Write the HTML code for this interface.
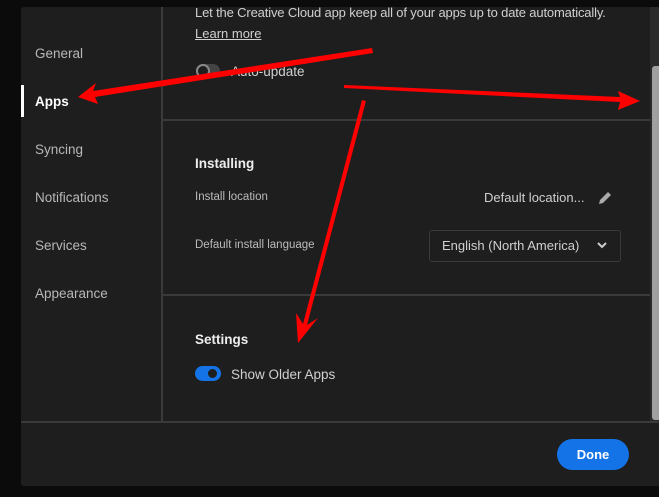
<!DOCTYPE html>
<html><head><style>
body{margin:0;width:659px;height:497px;background:#0b0b0b;position:relative;overflow:hidden;font-family:"Liberation Sans",sans-serif;}
.dlg{position:absolute;left:21px;top:7px;width:640px;height:479px;background:#1e1e1e;border-radius:3px;}
.abs{position:absolute;}
.nav{position:absolute;left:35px;font-size:13.5px;color:#b8b8b8;}
.t{position:absolute;color:#d0d0d0;font-size:12px;}
</style></head><body>
<div class="dlg"></div>
<div class="abs" style="left:161px;top:7px;width:2px;height:414px;background:#3a3a3a"></div>
<div class="abs" style="left:162px;top:119px;width:488px;height:2px;background:#3a3a3a"></div>
<div class="abs" style="left:162px;top:294px;width:488px;height:2px;background:#3a3a3a"></div>
<div class="abs" style="left:21px;top:421px;width:638px;height:2px;background:#3a3a3a"></div>
<div class="abs" style="left:650px;top:7px;width:9px;height:414px;background:#2a2a2a"></div>
<div class="abs" style="left:652px;top:66px;width:7px;height:354px;background:#a0a0a0;border-radius:3px 0 0 3px"></div>
<div class="abs" style="left:21px;top:85px;width:3px;height:32px;background:#fff"></div>
<div class="nav" style="top:46px">General</div>
<div class="nav" style="top:94px;color:#fff;font-weight:bold">Apps</div>
<div class="nav" style="top:142px">Syncing</div>
<div class="nav" style="top:190px">Notifications</div>
<div class="nav" style="top:238px">Services</div>
<div class="nav" style="top:286px">Appearance</div>
<div class="t" style="left:195px;top:5px;font-size:13px;letter-spacing:-0.15px">Let the Creative Cloud app keep all of your apps up to date automatically.</div>
<div class="t" style="left:195px;top:26px;font-size:13px;text-decoration:underline">Learn more</div>
<div class="abs" style="left:196px;top:64px;width:24px;height:14px;border-radius:7px;background:#444"></div>
<div class="abs" style="left:196px;top:64px;width:10px;height:10px;border:2px solid #888;border-radius:7px;background:#1e1e1e"></div>
<div class="t" style="left:231px;top:64px;font-size:13.5px">Auto-update</div>
<div class="t" style="left:195px;top:156px;font-size:13.5px;font-weight:bold;color:#eee">Installing</div>
<div class="t" style="left:195px;top:191px;font-size:11.5px;color:#bbb">Install location</div>
<div class="t" style="left:484px;top:190px;font-size:13px">Default location...</div>
<svg class="abs" style="left:596px;top:189px" width="18" height="18" viewBox="0 0 18 18"><path d="M3 15 L4 11 L12 3 L15 6 L7 14 Z" fill="#aaa"/></svg>
<div class="t" style="left:195px;top:239px;font-size:11.5px;color:#bbb">Default install language</div>
<div class="abs" style="left:429px;top:230px;width:190px;height:30px;border:1px solid #3a3a3a;border-radius:3px"></div>
<div class="t" style="left:442px;top:238px;font-size:13px">English (North America)</div>
<svg class="abs" style="left:596px;top:240px" width="12" height="10"><path d="M2 3 L6 7 L10 3" stroke="#ccc" stroke-width="2" fill="none"/></svg>
<div class="t" style="left:195px;top:332px;font-size:13.5px;font-weight:bold;color:#eee">Settings</div>
<div class="abs" style="left:195px;top:366px;width:26px;height:15px;border-radius:8px;background:#1473e6"></div>
<div class="abs" style="left:208px;top:369px;width:9px;height:9px;border-radius:6px;background:#1e1e1e"></div>
<div class="t" style="left:231px;top:367px;font-size:13.5px">Show Older Apps</div>
<div class="abs" style="left:557px;top:439px;width:72px;height:31px;border-radius:16px;background:#1473e6;color:#fff;font-weight:bold;font-size:13px;text-align:center;line-height:31px">Done</div>
<svg class="abs" style="left:0;top:0" width="659" height="497">
<g fill="#ff0000">
<polygon points="372,48 373,53 95,97 98,104 78,97 96,83 93,91"/>
<polygon points="344,85 344,88 620,102 618,110 640,101 618,91 620,97"/>
<polygon points="362,100 366,101 307,325 318,318 298,343 296,313 303,324"/>
</g></svg>
</body></html>
